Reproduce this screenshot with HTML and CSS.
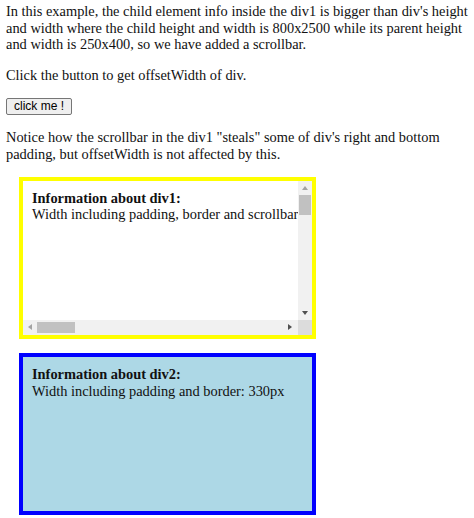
FILE: index.html
```html
<!DOCTYPE html>
<html>
<head>
<meta charset="utf-8">
<link rel="stylesheet" href="styles.css">
</head>
<body>
<p class="first">In this example, the child element info inside the div1 is bigger than div's height and width where the child height and width is 800x2500 while its parent height and width is 250x400, so we have added a scrollbar.</p>
<p>Click the button to get offsetWidth of div.</p>
<button class="btn">click me !</button>
<p>Notice how the scrollbar in the div1 "steals" some of div's right and bottom padding, but offsetWidth is not affected by this.</p>

<div class="box yellow">
  <div class="scroll-content">
    <b>Information about div1:</b><br>Width including padding, border and scrollbar: 330px
  </div>
  <div class="vbar">
    <div class="sbtn"><svg width="6" height="4" viewBox="0 0 6 4"><polygon points="0,4 6,4 3,0" fill="#a3a3a3"/></svg></div>
    <div class="vtrack"><div class="vthumb"></div></div>
    <div class="sbtn"><svg width="6" height="4" viewBox="0 0 6 4"><polygon points="0,0 6,0 3,4" fill="#505050"/></svg></div>
  </div>
  <div class="hbar">
    <div class="sbtn"><svg width="4" height="6" viewBox="0 0 4 6"><polygon points="4,0 4,6 0,3" fill="#a3a3a3"/></svg></div>
    <div class="htrack"><div class="hthumb"></div></div>
    <div class="sbtn"><svg width="4" height="6" viewBox="0 0 4 6"><polygon points="0,0 0,6 4,3" fill="#505050"/></svg></div>
  </div>
  <div class="corner"></div>
</div>

<div class="box blue">
  <b>Information about div2:</b><br>Width including padding and border: 330px
</div>
</body>
</html>
```

FILE: styles.css
```css
html { background: #fff; }
body {
  margin: 0 0 0 6px;
  font-family: "Liberation Serif", "Times New Roman", serif;
  font-size: 14.4px;
  line-height: 16.5px;
  color: #111;
}
p { margin: 14.4px 0; }
p.first { margin-top: 3px; }
.btn {
  display: block;
  font-family: "Liberation Sans", Arial, sans-serif;
  font-size: 12px;
  line-height: 14px;
  padding: 0 7px;
  margin: 0;
  background: #efefef;
  border: 1px solid #767676;
  border-radius: 2px;
  color: #000;
  height: 17px;
}
.box {
  box-sizing: border-box;
  width: 297px;
  height: 162px;
  margin: 0 0 0 13px;
  border: 4.5px solid;
}
.yellow {
  margin-top: 14px;
  border-color: #ffff00;
  background: #fff;
  display: grid;
  grid-template-columns: 1fr 14.4px;
  grid-template-rows: 1fr 14.2px;
}
.blue {
  margin-top: 14.8px;
  border-color: #0000ff;
  background: #add8e6;
  padding: 9px;
}
.scroll-content {
  overflow: hidden;
  white-space: nowrap;
  padding: 9px 0 0 9px;
}
.vbar {
  background: #f1f1f1;
  display: flex;
  flex-direction: column;
}
.hbar {
  background: #f1f1f1;
  display: flex;
}
.sbtn {
  flex: 0 0 14.4px;
  display: flex;
  align-items: center;
  justify-content: center;
}
.vtrack { flex: 1; }
.vthumb {
  height: 20px;
  margin: 0 1.5px;
  background: #c1c1c1;
}
.htrack {
  flex: 1;
  display: flex;
  align-items: center;
}
.hthumb {
  width: 38px;
  height: 11.4px;
  background: #c1c1c1;
}
.corner { background: #dcdcdc; }
```
